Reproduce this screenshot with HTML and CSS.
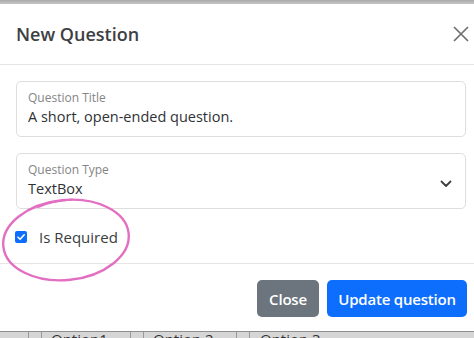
FILE: index.html
```html
<!DOCTYPE html>
<html>
<head>
<meta charset="utf-8">
<link rel="stylesheet" href="styles.css">
</head>
<body>
<div class="page">
  <div class="topbar"></div>
  <div class="modal">
    <div class="modal-header">
      <h5 class="modal-title">New Question</h5>
      <span class="btn-close" aria-label="Close">
        <svg width="18" height="18" viewBox="0 0 18 18"><path d="M2 2L16 16M16 2L2 16" stroke="#707070" stroke-width="1.7" fill="none"/></svg>
      </span>
    </div>
    <div class="modal-body">
      <div class="field">
        <div class="field-label">Question Title</div>
        <div class="field-value">A short, open-ended question.</div>
      </div>
      <div class="field field-select">
        <div class="field-text">
          <div class="field-label">Question Type</div>
          <div class="field-value">TextBox</div>
        </div>
        <svg class="chevron" width="12" height="8" viewBox="0 0 12 8"><path d="M1.5 1.5L6 6L10.5 1.5" stroke="#3a3f44" stroke-width="1.8" fill="none" stroke-linecap="round" stroke-linejoin="round"/></svg>
      </div>
      <div class="check-row">
        <span class="checkbox">
          <svg width="12" height="12" viewBox="0 0 12 12"><path d="M3 6.2L5.1 8.3L9.2 3.8" stroke="#fff" stroke-width="1.6" fill="none" stroke-linecap="round" stroke-linejoin="round"/></svg>
        </span>
        <span class="check-label">Is Required</span>
      </div>
    </div>
    <div class="modal-footer">
      <span class="btn btn-secondary">Close</span>
      <span class="btn btn-primary">Update question</span>
    </div>
  </div>
  <div class="table-strip">
    <div class="cell c1"></div>
    <div class="cell c2"></div>
    <div class="cell c3">Option1</div>
    <div class="cell c2"></div>
    <div class="cell c4">Option 2</div>
    <div class="cell c2"></div>
    <div class="cell c5">Option 3</div>
  </div>
  <svg class="annotation" width="474" height="338" viewBox="0 0 474 338">
    <ellipse cx="66" cy="240" rx="63" ry="40" transform="rotate(-6 66 240)" fill="none" stroke="#e26fc2" stroke-width="2.4"/>
    <path d="M38 207 C 47 203, 58 200.5, 72 199.5" fill="none" stroke="#e26fc2" stroke-width="2" stroke-linecap="round"/>
  </svg>
</div>
</body>
</html>
```
FILE: styles.css
```css
html, body {
  margin: 0;
  padding: 0;
}
body {
  font-family: "Open Sans", "Noto Sans", sans-serif;
  color: #333639;
}
.page {
  position: relative;
  width: 474px;
  height: 338px;
  overflow: hidden;
  background: #d2d2d2;
}
.topbar {
  height: 4px;
  background: linear-gradient(#a9a9a9, #c6c6c6);
}
.modal {
  background: #fff;
}
.modal-header {
  height: 60px;
  display: flex;
  align-items: center;
  padding: 0 4px 0 16px;
  border-bottom: 1px solid #e6e6e6;
}
.modal-title {
  margin: 0;
  flex: 1;
  font-size: 18px;
  font-weight: 600;
  color: #3d4043;
  line-height: 24px;
}
.btn-close {
  display: flex;
  width: 18px;
  height: 18px;
}
.modal-body {
  padding: 16px 8px 14px 16px;
}
.field {
  box-sizing: border-box;
  height: 56px;
  border: 1px solid #dedede;
  border-radius: 5px;
  padding: 8px 11px 0;
}
.field-select {
  margin-top: 16px;
  display: flex;
  align-items: center;
  padding-right: 13px;
}
.field-text {
  flex: 1;
  align-self: flex-start;
}
.chevron {
  margin-top: -2px;
}
.field-label {
  font-size: 12px;
  line-height: 16px;
  color: #858585;
}
.field-value {
  margin-top: 1px;
  font-size: 14.5px;
  line-height: 20px;
  color: #2f3236;
}
.check-row {
  display: flex;
  align-items: center;
  height: 24px;
  margin-top: 16px;
  margin-left: -1px;
}
.checkbox {
  display: flex;
  width: 12px;
  height: 12px;
  border-radius: 2px;
  background: #0d6efd;
}
.check-label {
  margin-left: 12px;
  font-size: 15px;
  color: #3a3d40;
}
.modal-footer {
  display: flex;
  justify-content: flex-end;
  gap: 8px;
  padding: 16px 7px 14px 16px;
  border-top: 1px solid #e6e6e6;
}
.btn {
  display: flex;
  align-items: center;
  justify-content: center;
  height: 37px;
  border-radius: 5px;
  color: #fff;
  font-size: 15px;
  font-weight: 600;
  letter-spacing: -0.2px;
}
.btn-secondary {
  width: 62px;
  background: #6c757d;
}
.btn-primary {
  width: 140px;
  background: #0d6efd;
}
.table-strip {
  display: flex;
  height: 20px;
  border-top: 1px solid #8f8f8f;
  background: #d6d6d6;
}
.cell {
  box-sizing: border-box;
  border-left: 1px solid #9a9a9a;
  font-size: 15px;
  line-height: 14px;
  color: #333;
  white-space: nowrap;
}
.c1 { width: 28px; border-left: none; }
.c2 { width: 13px; }
.c3 { width: 89px; padding-left: 9px; }
.c4 { width: 93px; padding-left: 9px; }
.c5 { flex: 1; padding-left: 10px; }
.annotation {
  position: absolute;
  left: 0;
  top: 0;
  pointer-events: none;
}
```
